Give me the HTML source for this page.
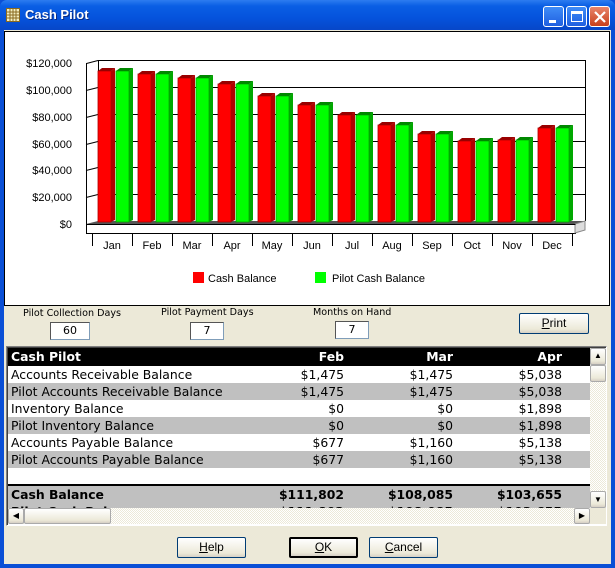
<!DOCTYPE html>
<html><head><meta charset="utf-8"><style>
*{margin:0;padding:0;box-sizing:border-box}
body{width:615px;height:568px;overflow:hidden;background:#0a4fd6;font-family:Tahoma,"DejaVu Sans",sans-serif;position:relative}
.abs{position:absolute}
#title{left:0;top:0;width:615px;height:30px;background:linear-gradient(#2d7cf0 0%,#0a5fe4 20%,#0553dc 60%,#0747c8 100%);border-radius:7px 7px 0 0}
#body{left:4px;top:30px;width:607px;height:534px;background:#ece9d8}
.tb{top:6px;width:21px;height:21px;border:1px solid #fff;border-radius:3px;background:linear-gradient(#3f8cf7,#1f5fe0)}
.btn{height:21px;border:1px solid #003c74;border-radius:2px;background:linear-gradient(#fff,#ece9d8 80%,#d6d0c5);font:12px "Liberation Sans",sans-serif;text-align:center;line-height:19px;color:#000}
.lbl{font:9.6px "DejaVu Sans",sans-serif;color:#000}
.inp{width:40px;height:18px;background:#fff;border:1px solid #7f9db9;font:11px "DejaVu Sans",sans-serif;text-align:center;line-height:16px;border-top-color:#555;border-left-color:#555}
.row{position:absolute;left:8px;width:582px;height:17px;font:12.4px "DejaVu Sans",sans-serif;line-height:17px;color:#000}
.row span{position:absolute;top:0}
.c0{left:3px}.c1{right:246px}.c2{right:137px}.c3{right:28px}
.g{background:#c0c0c0}.w{background:#fff}
</style></head><body>
<div id="title" class="abs">
 <svg class="abs" style="left:6px;top:8px" width="14" height="14"><rect x="0.5" y="0.5" width="13" height="13" fill="#f3eec0" stroke="#8a6a20"/><path d="M0 4H14M0 7H14M0 10H14M4 0V14M7 0V14M10 0V14" stroke="#8a6a20" stroke-width="1"/></svg>
 <div class="abs" style="left:25px;top:7px;color:#fff;font:bold 13px 'Liberation Sans',sans-serif;text-shadow:1px 1px #0a2a80">Cash Pilot</div>
 <div class="abs tb" style="left:543px"><div class="abs" style="left:5px;top:13px;width:7px;height:3px;background:#fff"></div></div>
 <div class="abs tb" style="left:566px"><div class="abs" style="left:4px;top:4px;width:12px;height:11px;border:1px solid #fff;border-top-width:3px"></div></div>
 <div class="abs tb" style="left:589px;background:linear-gradient(#e8846a,#c8401c)"><svg class="abs" style="left:4px;top:4px" width="12" height="12"><path d="M1 1L11 11M11 1L1 11" stroke="#fff" stroke-width="2.2"/></svg></div>
</div>
<div id="body" class="abs"></div>
<div class="abs" style="left:4px;top:31px;width:606px;height:275px;background:#fff;border:1px solid #000"></div>
<svg class="abs" style="left:0;top:0" width="615" height="300" font-family="Liberation Sans,sans-serif" font-size="11">
 <g fill="#000" text-anchor="end">
  <text x="72" y="67">$120,000</text><text x="72" y="94">$100,000</text><text x="72" y="121">$80,000</text><text x="72" y="148">$60,000</text><text x="72" y="174">$40,000</text><text x="72" y="201">$20,000</text><text x="72" y="228">$0</text>
 </g>
 <g stroke="#000" stroke-width="1" fill="none">
  <path d="M98 60.5H585.5V221M98 87.5H585M98 114.5H585M98 141.5H585M98 167.5H585M98 194.5H585"/>
  <path d="M98.5 60V221M86.5 63.5L98 60.5M86 90.5L98 87.5M86 117.5L98 114.5M86 144.5L98 141.5M86 170.5L98 167.5M86 197.5L98 194.5"/>
  <path d="M86.5 63V233.5H575.5V224.5"/>
  <path d="M92.5 233V246M132.5 233V246M172.5 233V246M212.5 233V246M252.5 233V246M292.5 233V246M332.5 233V246M372.5 233V246M412.5 233V246M452.5 233V246M492.5 233V246M532.5 233V246M572.5 233V246"/>
 </g>
 <polygon points="86,224 98,221 585,221 575,224" fill="#555"/>
 <polygon points="575,224 585,221 585,230 575,233" fill="#ddd" stroke="#888"/>
 <path d="M86.5 224.5H575.5" stroke="#000"/>
 <g id="bars"></g>
 <g fill="#000" text-anchor="middle">
  <text x="112" y="249">Jan</text><text x="152" y="249">Feb</text><text x="192" y="249">Mar</text><text x="232" y="249">Apr</text><text x="272" y="249">May</text><text x="312" y="249">Jun</text><text x="352" y="249">Jul</text><text x="392" y="249">Aug</text><text x="432" y="249">Sep</text><text x="472" y="249">Oct</text><text x="512" y="249">Nov</text><text x="552" y="249">Dec</text>
 </g>
 <rect x="193" y="272" width="11" height="11" fill="#f00"/><text x="208" y="282">Cash Balance</text>
 <rect x="315" y="272" width="11" height="11" fill="#0f0"/><text x="332" y="282">Pilot Cash Balance</text>
</svg>
<script>
var tops=[71,74,78,84,96,105,115,125,134,141,140,128],s='';
function bar(x,t,f,sd,tp){return '<rect x="'+x+'" y="'+t+'" width="13" height="'+(222-t)+'" fill="'+f+'" stroke="'+sd+'" stroke-width="0.8"/>'+
'<polygon points="'+(x+13)+','+t+' '+(x+17)+','+(t-3)+' '+(x+17)+',220 '+(x+13)+',222" fill="'+sd+'"/>'+
'<polygon points="'+x+','+t+' '+(x+4)+','+(t-3)+' '+(x+17)+','+(t-3)+' '+(x+13)+','+t+'" fill="'+tp+'"/>';}
for(var i=0;i<12;i++){var b=98+40*i;s+=bar(b,tops[i],'#f00','#b00000','#900')+bar(b+18,tops[i],'#0f0','#00a800','#080');}
document.getElementById('bars').innerHTML=s;
</script>
<div class="abs lbl" style="left:23px;top:308px">Pilot Collection Days</div>
<div class="abs inp" style="left:50px;top:322px">60</div>
<div class="abs lbl" style="left:161px;top:307px">Pilot Payment Days</div>
<div class="abs inp" style="left:190px;top:322px;width:34px">7</div>
<div class="abs lbl" style="left:313px;top:307px">Months on Hand</div>
<div class="abs inp" style="left:335px;top:321px;width:34px">7</div>
<div class="abs btn" style="left:519px;top:313px;width:70px"><u>P</u>rint</div>
<div class="abs" style="left:6px;top:346px;width:601px;height:180px;border:1px solid #808080;border-right-color:#fff;border-bottom-color:#fff;background:#fff;overflow:hidden">
 <div class="abs" style="left:0;top:0;width:599px;height:178px;border:1px solid #404040;border-right:none;border-bottom:none"></div>
</div>
<div class="row" style="top:348px;background:#000;color:#fff;font-weight:bold;height:18px"><span class="c0">Cash Pilot</span><span class="c1">Feb</span><span class="c2">Mar</span><span class="c3">Apr</span></div>
<div class="row w" style="top:366px"><span class="c0">Accounts Receivable Balance</span><span class="c1">$1,475</span><span class="c2">$1,475</span><span class="c3">$5,038</span></div>
<div class="row g" style="top:383px"><span class="c0">Pilot Accounts Receivable Balance</span><span class="c1">$1,475</span><span class="c2">$1,475</span><span class="c3">$5,038</span></div>
<div class="row w" style="top:400px"><span class="c0">Inventory Balance</span><span class="c1">$0</span><span class="c2">$0</span><span class="c3">$1,898</span></div>
<div class="row g" style="top:417px"><span class="c0">Pilot Inventory Balance</span><span class="c1">$0</span><span class="c2">$0</span><span class="c3">$1,898</span></div>
<div class="row w" style="top:434px"><span class="c0">Accounts Payable Balance</span><span class="c1">$677</span><span class="c2">$1,160</span><span class="c3">$5,138</span></div>
<div class="row g" style="top:451px"><span class="c0">Pilot Accounts Payable Balance</span><span class="c1">$677</span><span class="c2">$1,160</span><span class="c3">$5,138</span></div>
<div class="abs" style="left:8px;top:484px;width:582px;height:2px;background:#000"></div>
<div class="row g" style="top:486px;font-weight:bold"><span class="c0">Cash Balance</span><span class="c1">$111,802</span><span class="c2">$108,085</span><span class="c3">$103,655</span></div>
<div class="row g" style="top:502px;height:6px;overflow:hidden;font-weight:bold"><span class="c0" style="top:1px">Pilot Cash Balance</span><span class="c1" style="top:1px">$111,802</span><span class="c2" style="top:1px">$108,085</span><span class="c3" style="top:1px">$103,655</span></div>
<div class="abs" style="left:590px;top:348px;width:16px;height:160px;background:repeating-conic-gradient(#fff 0 25%,#ece9d8 0 50%) 0 0/2px 2px"></div>
<div class="abs btn" style="left:590px;top:348px;width:16px;height:17px;border-color:#aaa;line-height:14px;font-size:8px">▲</div>
<div class="abs btn" style="left:590px;top:365px;width:16px;height:17px;border-color:#aaa"></div>
<div class="abs btn" style="left:590px;top:491px;width:16px;height:17px;border-color:#aaa;line-height:16px;font-size:8px">▼</div>
<div class="abs" style="left:8px;top:508px;width:582px;height:16px;background:repeating-conic-gradient(#fff 0 25%,#ece9d8 0 50%) 0 0/2px 2px"></div>
<div class="abs btn" style="left:8px;top:508px;width:16px;height:16px;border-color:#aaa;line-height:14px;font-size:8px">◀</div>
<div class="abs btn" style="left:24px;top:508px;width:87px;height:16px;border-color:#aaa"></div>
<div class="abs btn" style="left:574px;top:508px;width:16px;height:16px;border-color:#aaa;line-height:14px;font-size:8px">▶</div>
<div class="abs" style="left:590px;top:508px;width:16px;height:16px;background:#ece9d8"></div>
<div class="abs btn" style="left:177px;top:537px;width:69px"><u>H</u>elp</div>
<div class="abs btn" style="left:289px;top:537px;width:69px;border:2px solid #000;line-height:17px"><u>O</u>K</div>
<div class="abs btn" style="left:369px;top:537px;width:69px"><u>C</u>ancel</div>
</body></html>
